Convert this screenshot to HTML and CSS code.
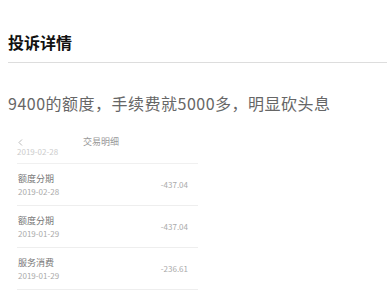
FILE: index.html
```html
<!DOCTYPE html>
<html lang="zh-CN">
<head>
<meta charset="UTF-8">
<meta name="viewport" content="width=device-width, initial-scale=1.0">
<title>投诉详情</title>
<link rel="stylesheet" href="styles.css">
</head>
<body>

<div class="page">

<h2 class="title">投诉详情</h2>

<p class="content">9400的额度，手续费就5000多，明显砍头息</p>

<div class="shot">
    <div class="shot-head">
        <span class="back"><svg width="5" height="7" viewBox="0 0 5 7"><path d="M4 0.5 L1 3.5 L4 6.5" fill="none" stroke="#bbb" stroke-width="1"/></svg></span>
        <span class="shot-title">交易明细</span>
    </div>
    <div class="shot-date-top">2019-02-28</div>

    <div class="row">
        <div class="row-left">
            <div class="row-name">额度分期</div>
            <div class="row-date">2019-02-28</div>
        </div>
        <div class="row-amount">-437.04</div>
    </div>

    <div class="row">
        <div class="row-left">
            <div class="row-name">额度分期</div>
            <div class="row-date">2019-01-29</div>
        </div>
        <div class="row-amount">-437.04</div>
    </div>

    <div class="row">
        <div class="row-left">
            <div class="row-name">服务消费</div>
            <div class="row-date">2019-01-29</div>
        </div>
        <div class="row-amount">-236.61</div>
    </div>
</div>

</div>

</body>
</html>
```

FILE: styles.css
```css
body{
    margin:0;
    background:#fff;
    font-family:"Noto Sans CJK SC", "Noto Sans", sans-serif;
}

.page{
    padding:0 0 0 8px;
}

.title{
    margin:0;
    padding-top:30px;
    padding-bottom:8px;
    font-size:16px;
    line-height:24px;
    font-weight:bold;
    color:#111;
    border-bottom:1px solid #ddd;
}

.content{
    margin:28px 0 0 0;
    font-size:16px;
    line-height:24px;
    color:#666;
    letter-spacing:0.5px;
}

.shot{
    margin:21px 0 0 9px;
    width:181px;
    color:#aaa;
}

.shot-head{
    height:12px;
    display:flex;
    align-items:center;
    font-size:9px;
    line-height:12px;
    color:#999;
}

.back{
    width:65px;
    height:12px;
    display:flex;
    align-items:center;
    padding-left:1px;
}

.shot-date-top{
    font-size:8px;
    color:#ccc;
    line-height:8px;
    padding-bottom:7px;
    border-bottom:1px solid #f0f0f0;
}

.row{
    display:flex;
    justify-content:space-between;
    align-items:center;
    height:41px;
    border-bottom:1px solid #eee;
    padding-left:1px;
}

.row-name{
    font-size:9px;
    color:#777;
    line-height:14px;
}

.row-date{
    font-size:8px;
    color:#aaa;
    line-height:12px;
}

.row-amount{
    font-size:8px;
    color:#aaa;
    padding-right:10px;
}
```
